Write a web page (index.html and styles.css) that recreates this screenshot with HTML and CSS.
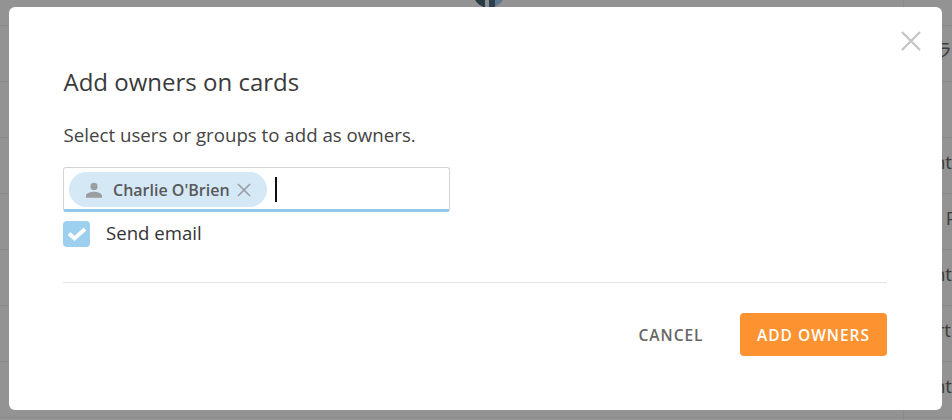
FILE: index.html
```html
<!DOCTYPE html>
<html lang="en">
<head>
<meta charset="utf-8">
<title>Add owners on cards</title>
<link rel="stylesheet" href="styles.css">
</head>
<body>
<div class="backdrop">
  <div class="row row-first"><span class="avatar"></span></div>
  <div class="row"><span class="peek">ラ</span></div>
  <div class="row"></div>
  <div class="row"><span class="peek">nt</span></div>
  <div class="row"><span class="peek peek-p">P</span></div>
  <div class="row"><span class="peek">nt</span></div>
  <div class="row"><span class="peek peek-r">rt</span></div>
  <div class="row"><span class="peek">nt</span></div>
  <span class="col-line col-a"></span>
  <span class="col-line col-b"></span>
</div>
<div class="modal">
  <button class="close" aria-label="Close">
    <svg width="20" height="20" viewBox="0 0 20 20"><path d="M1 1L19 19M19 1L1 19" stroke="#c4c4c4" stroke-width="2.200" fill="none"/></svg>
  </button>
  <h1 class="title">Add owners on cards</h1>
  <p class="hint">Select users or groups to add as owners.</p>
  <div class="field">
    <span class="chip">
      <svg class="chip-user" width="16" height="16" viewBox="0 0 16 16"><path d="M8 8a3.600 3.600 0 1 0 0-7.200A3.600 3.600 0 0 0 8 8zm0 1.800c-2.700 0-8 1.300-8 4v1.900h16v-1.900c0-2.700-5.300-4-8-4z" fill="#9a9ea1"/></svg>
      <span class="chip-name">Charlie O'Brien</span>
      <svg class="chip-x" width="14" height="14" viewBox="0 0 14 14"><path d="M1 1L13 13M13 1L1 13" stroke="#9a9ea1" stroke-width="1.600" fill="none"/></svg>
    </span>
    <span class="caret"></span>
  </div>
  <label class="check">
    <span class="box"><svg width="20" height="14" viewBox="0 0 20 14"><path d="M2 6.500L7.500 11.500L18 2" stroke="#fff" stroke-width="3.800" fill="none"/></svg></span>
    <span class="check-label">Send email</span>
  </label>
  <hr class="rule">
  <div class="actions">
    <button class="btn btn-cancel">CANCEL</button>
    <button class="btn btn-add">ADD OWNERS</button>
  </div>
</div>
</body>
</html>
```
FILE: styles.css
```css
* { box-sizing: border-box; }
html, body { margin: 0; height: 100%; }
body {
  width: 952px;
  height: 420px;
  overflow: hidden;
  position: relative;
  background: #939393;
  font-family: "Open Sans", sans-serif;
  color: #333;
}
.backdrop { height: 420px; overflow: hidden; }
.row {
  height: 56px;
  border-bottom: 1px solid #8a8a8a;
  display: flex;
  align-items: center;
  justify-content: flex-end;
  position: relative;
}
.row-first { height: 26px; }
.peek {
  font-size: 18.600px;
  line-height: 24px;
  margin-bottom: 7px;
  color: #3c3c3c;
  white-space: nowrap;
  font-family: "Open Sans", "Noto Sans CJK JP", sans-serif;
}
.peek-r { margin-right: 1px; }
.peek-p { margin-right: -5px; }
.avatar {
  position: absolute;
  left: 473px;
  top: -24px;
  width: 32px;
  height: 32px;
  border-radius: 50%;
  background: linear-gradient(90deg, #2a3840 0 38%, #8a8f96 38% 50%, #2f3f52 50% 70%, #5f7690 70% 100%);
}
.col-line {
  position: absolute;
  width: 1px;
  background: #8a8a8a;
}
.col-a { left: 903px; top: 0; height: 7px; }
.col-b { left: 903px; top: 410px; height: 10px; }
.modal {
  position: absolute;
  left: 9px;
  top: 7px;
  width: 933px;
  height: 403px;
  background: #fff;
  border-radius: 6px;
  padding: 58px 55px 0 54.500px;
}
.close {
  position: absolute;
  top: 24px;
  right: 21px;
  padding: 0;
  border: 0;
  background: none;
  width: 20px;
  height: 20px;
}
.close svg { display: block; }
.title {
  margin: 0;
  font-size: 24px;
  line-height: 34px;
  font-weight: 400;
  color: #3a3a3a;
}
.hint {
  margin: 24px 0 0;
  font-size: 18.700px;
  line-height: 24px;
  color: #444;
}
.field {
  margin-top: 20px;
  margin-left: -0.500px;
  width: 387px;
  height: 45px;
  border: 1px solid #d4d4d4;
  border-bottom: 3px solid #93c8ea;
  border-radius: 3px;
  display: flex;
  align-items: center;
  padding: 2px 0 0 5px;
}
.chip {
  height: 35px;
  width: 198px;
  border-radius: 18px;
  background: #d5e8f6;
  display: flex;
  align-items: center;
  padding-left: 17px;
}
.chip-user { flex: none; }
.chip-name {
  margin-left: 11px;
  font-size: 16px;
  font-weight: 600;
  color: #58595b;
  white-space: nowrap;
}
.chip-x { flex: none; margin-left: 7px; }
.caret {
  width: 2px;
  height: 25px;
  margin-left: 8px;
  background: #111;
}
.check {
  display: flex;
  align-items: center;
  margin-top: 9px;
  margin-left: -0.500px;
  font-size: 18.600px;
  line-height: 26px;
  color: #333;
  gap: 16px;
}
.check-label { margin-top: -2px; }
.box {
  width: 27px;
  height: 26px;
  border-radius: 4px;
  background: #9dcfee;
  display: flex;
  align-items: center;
  justify-content: center;
}
.rule {
  margin: 35px 0 0 -0.500px;
  border: 0;
  border-top: 1px solid #e4e4e4;
  width: 824px;
}
.actions {
  display: flex;
  justify-content: flex-end;
  align-items: center;
  width: 823.500px;
  margin-top: 30px;
  gap: 27px;
}
.btn {
  height: 43px;
  border: 0;
  border-radius: 4px;
  font-family: inherit;
  font-size: 15.500px;
  font-weight: 600;
  letter-spacing: 1px;
  padding: 0;
}
.btn-cancel {
  width: 84px;
  background: none;
  color: #666;
}
.btn-add {
  width: 147px;
  background: #fd9330;
  color: #fff;
}
```
